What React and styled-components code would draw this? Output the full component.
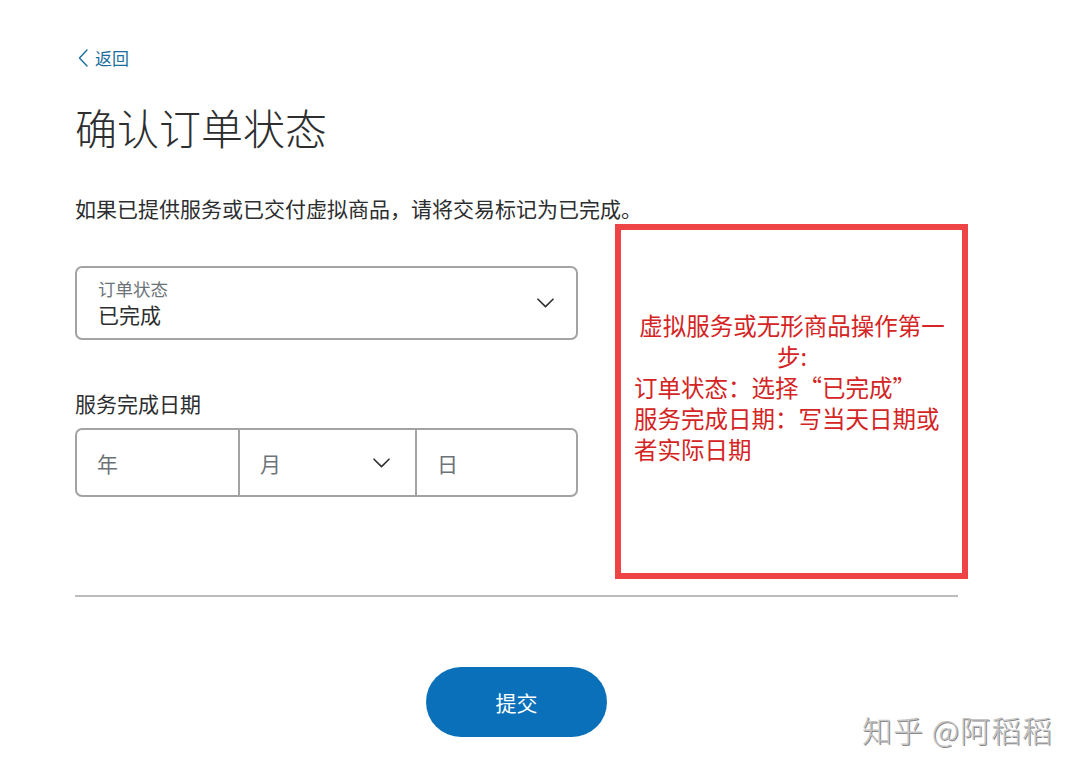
import React from 'react';
import styled, { createGlobalStyle } from 'styled-components';

const GlobalStyle = createGlobalStyle`
  html, body {
    margin: 0;
    padding: 0;
    background: #ffffff;
  }
  body {
    font-family: "Noto Sans CJK SC", "Noto Sans", "Liberation Sans", sans-serif;
    color: #2c2e2f;
  }
`;

const Page = styled.div`
  position: relative;
  width: 1083px;
  height: 773px;
  overflow: hidden;
  box-sizing: border-box;
  padding: 47px 0 0 75px;
`;

const Content = styled.div`
  width: 883px;
`;

const BackLink = styled.a`
  display: inline-flex;
  align-items: center;
  gap: 7px;
  margin-left: 3px;
  font-size: 17px;
  line-height: 22px;
  color: #1b6e9c;
  text-decoration: none;
  cursor: pointer;
`;

const Title = styled.h1`
  margin: 29px 0 0;
  font-size: 42px;
  line-height: 52px;
  font-weight: 300;
  color: #2c2e2f;
`;

const Description = styled.p`
  margin: 42px 0 0;
  font-size: 21px;
  line-height: 26px;
  color: #2c2e2f;
`;

const Row = styled.div`
  display: flex;
  align-items: flex-start;
  gap: 37px;
  margin-top: 3px;
`;

const FormColumn = styled.div`
  flex: 0 0 503px;
  padding-top: 42px;
`;

const SelectBox = styled.div`
  box-sizing: border-box;
  height: 74px;
  border: 2px solid #a3a3a3;
  border-radius: 7px;
  display: flex;
  align-items: center;
  justify-content: space-between;
  padding: 0 22px 0 21px;
`;

const SelectText = styled.div`
  display: flex;
  flex-direction: column;
  padding-bottom: 2px;
`;

const SmallLabel = styled.span`
  font-size: 17.5px;
  line-height: 24px;
  color: #6c7378;
`;

const Value = styled.span`
  font-size: 21px;
  line-height: 27px;
  color: #2c2e2f;
`;

const FieldLabel = styled.div`
  margin-top: 50px;
  font-size: 21px;
  line-height: 26px;
  color: #2c2e2f;
`;

const DateGroup = styled.div`
  box-sizing: border-box;
  margin-top: 12px;
  height: 69px;
  border: 2px solid #a3a3a3;
  border-radius: 7px;
  display: grid;
  grid-template-columns: 161px 177px 1fr;
`;

const DateCell = styled.div`
  display: flex;
  align-items: center;
  justify-content: space-between;
  padding: 0 25px 0 20px;
  border-left: ${(p) => (p.$first ? 'none' : '2px solid #a3a3a3')};
  font-size: 21px;
  color: #6c7378;
`;

const NoteBox = styled.div`
  flex: 0 0 353px;
  box-sizing: border-box;
  height: 355px;
  border: 6px solid #ef4446;
  padding: 80px 12px 0 13px;
  color: #d42424;
  font-size: 23.5px;
  line-height: 31px;
`;

const NoteHead = styled.div`
  text-align: center;
`;

const Divider = styled.hr`
  margin: 16px 0 0;
  border: none;
  height: 2px;
  background: #bdbdbd;
`;

const Actions = styled.div`
  display: flex;
  justify-content: center;
  margin-top: 70px;
`;

const SubmitButton = styled.button`
  width: 181px;
  height: 70px;
  border: none;
  border-radius: 35px;
  background: #0a70ba;
  color: #ffffff;
  font-family: inherit;
  font-size: 21px;
  cursor: pointer;
`;

const Watermark = styled.div`
  position: absolute;
  right: 30px;
  bottom: 26px;
  font-size: 30px;
  line-height: 36px;
  font-weight: 300;
  color: #c4c4c4;
  letter-spacing: 1px;
  text-shadow: 1px 1px 0 #8a8a8a, -1px -1px 0 #ffffff;
`;

const Chevron = ({ color = '#2c2e2f' }) => (
  <svg width="17" height="10" viewBox="0 0 17 10" fill="none">
    <path d="M1 1.2 L8.5 8.6 L16 1.2" stroke={color} strokeWidth="1.6" strokeLinecap="round" strokeLinejoin="round" />
  </svg>
);

const BackChevron = () => (
  <svg width="10" height="18" viewBox="0 0 10 18" fill="none">
    <path d="M9 1 L1.5 9 L9 17" stroke="#1b6e9c" strokeWidth="1.4" strokeLinecap="round" strokeLinejoin="round" />
  </svg>
);

export default function App() {
  return (
    <Page>
      <GlobalStyle />
      <Content>
        <BackLink>
          <BackChevron />
          返回
        </BackLink>
        <Title>确认订单状态</Title>
        <Description>如果已提供服务或已交付虚拟商品，请将交易标记为已完成。</Description>
        <Row>
          <FormColumn>
            <SelectBox>
              <SelectText>
                <SmallLabel>订单状态</SmallLabel>
                <Value>已完成</Value>
              </SelectText>
              <Chevron />
            </SelectBox>
            <FieldLabel>服务完成日期</FieldLabel>
            <DateGroup>
              <DateCell $first>年</DateCell>
              <DateCell>
                月
                <Chevron />
              </DateCell>
              <DateCell>日</DateCell>
            </DateGroup>
          </FormColumn>
          <NoteBox>
            <NoteHead>虚拟服务或无形商品操作第一步:</NoteHead>
            <div>订单状态：选择“已完成”</div>
            <div>服务完成日期：写当天日期或者实际日期</div>
          </NoteBox>
        </Row>
        <Divider />
        <Actions>
          <SubmitButton>提交</SubmitButton>
        </Actions>
      </Content>
      <Watermark>知乎 @阿稻稻</Watermark>
    </Page>
  );
}
